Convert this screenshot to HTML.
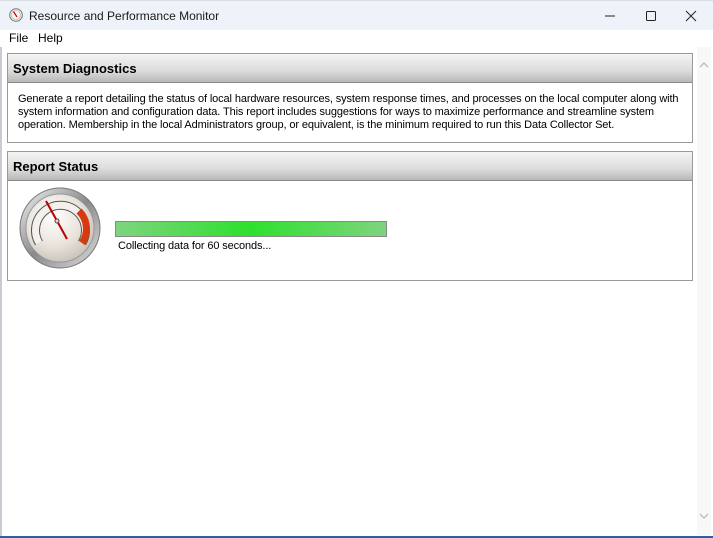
<!DOCTYPE html>
<html><head><style>
*{margin:0;padding:0;box-sizing:border-box}
body{width:713px;height:538px;overflow:hidden;background:#fff;font-family:"Liberation Sans",sans-serif;font-size:12px;color:#000;position:relative}
.title{position:absolute;left:0;top:0;width:713px;height:30px;background:#eef3f9;border-top:1px solid #d8dde3}
.title span{position:absolute;left:29px;top:8px;font-size:12px;color:#1a1a1a}
.menu{position:absolute;left:0;top:30px;width:713px;height:17px;background:#fff}
.menu span{position:absolute;top:1px;font-size:12px}
.content{position:absolute;left:0;top:47px;width:696px;height:489px;background:#fff;border-left:2px solid #c8ccd2}
.panel{position:absolute;left:7px;width:686px;border:1px solid #9a9a9a;background:#fff}
.hdr{height:29px;background:linear-gradient(#f4f4f4,#dcdcdc 60%,#b8b8b8);border-bottom:1px solid #8a8a8a;font-weight:bold;font-size:13px;padding:7px 0 0 5px}
.sb{position:absolute;left:697px;top:47px;width:14px;height:488px;background:#f8f8f8}
.bottom{position:absolute;left:0;top:536px;width:713px;height:2px;background:#2f5f9f}
</style></head><body>
<div class="title">
<svg style="position:absolute;left:9px;top:7px" width="14" height="14" viewBox="0 0 14 14"><circle cx="7" cy="7" r="6.3" fill="#eee" stroke="#777"/><circle cx="7" cy="7" r="4.5" fill="#f8f4f0" stroke="#aaa" stroke-width=".6"/><line x1="4.5" y1="3.5" x2="8" y2="9" stroke="#c00" stroke-width="1.2"/></svg>
<span>Resource and Performance Monitor</span>
<svg style="position:absolute;left:600px;top:9px" width="100" height="12" viewBox="0 0 100 12"><line x1="5" y1="6" x2="15" y2="6" stroke="#222"/><rect x="46.5" y="1.5" width="9" height="9" fill="none" stroke="#222" rx="1"/><path d="M86 1L96 11M96 1L86 11" stroke="#222"/></svg>
</div>
<div class="menu"><span style="left:9px">File</span><span style="left:38px">Help</span></div>
<div class="content"></div>
<div class="panel" style="top:53px;height:90px">
<div class="hdr">System Diagnostics</div>
<div style="padding:10px 0 0 10px;line-height:13px;font-size:11px;letter-spacing:-0.12px;white-space:nowrap">Generate a report detailing the status of local hardware resources, system response times, and processes on the local computer along with<br>system information and configuration data. This report includes suggestions for ways to maximize performance and streamline system<br>operation. Membership in the local Administrators group, or equivalent, is the minimum required to run this Data Collector Set.</div>
</div>
<div class="panel" style="top:151px;height:130px">
<div class="hdr">Report Status</div>
<svg style="position:absolute;left:11px;top:35px" width="82" height="82" viewBox="0 0 82 82">
<defs><radialGradient id="g" cx="40%" cy="35%" r="70%"><stop offset="0" stop-color="#fff"/><stop offset=".6" stop-color="#e8e2da"/><stop offset="1" stop-color="#c8c0b8"/></radialGradient>
<linearGradient id="r" x1="0" y1="0" x2="1" y2="1"><stop offset="0" stop-color="#f4f4f4"/><stop offset=".5" stop-color="#8a8a8a"/><stop offset="1" stop-color="#e0e0e0"/></linearGradient></defs>
<circle cx="41" cy="41" r="40" fill="url(#r)" stroke="#777"/>
<circle cx="41" cy="41" r="34" fill="url(#g)" stroke="#999"/>
<path d="M20 56A25 25 0 1 1 63 56" fill="none" stroke="#555" stroke-width="9"/>
<path d="M20 56A25 25 0 1 1 63 56" fill="none" stroke="#f4f0ec" stroke-width="7"/>
<path d="M60 24A25 25 0 0 1 63 56" fill="none" stroke="#d83a10" stroke-width="7"/>
<line x1="27" y1="14" x2="48" y2="52" stroke="#b00" stroke-width="2"/>
<circle cx="38" cy="34" r="2" fill="#ddd" stroke="#733"/>
</svg>
<div style="position:absolute;left:107px;top:69px;width:272px;height:16px;border:1px solid #888;background:linear-gradient(90deg,#7ed47e,#2ee02e 50%,#7ed47e)"></div>
<div style="position:absolute;left:110px;top:88px;font-size:11px;letter-spacing:-0.12px">Collecting data for 60 seconds...</div>
</div>
<div class="sb">
<svg style="position:absolute;left:2px;top:14px" width="10" height="8"><path d="M1 6L5 2L9 6" fill="none" stroke="#bbb" stroke-width="1.3"/></svg>
<svg style="position:absolute;left:2px;top:465px" width="10" height="8"><path d="M1 2L5 6L9 2" fill="none" stroke="#bbb" stroke-width="1.3"/></svg>
</div>
<div class="bottom"></div>
</body></html>
